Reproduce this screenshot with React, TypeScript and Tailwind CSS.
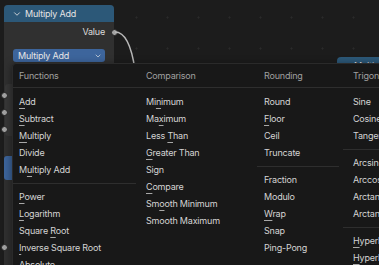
import { ChevronDown } from "lucide-react";

type Item = [string, number] | null;

type Column = {
  title: string;
  w: string;
  pl: string;
  items: Item[];
};

const columns: Column[] = [
  {
    title: "Functions",
    w: "w-[127px]",
    pl: "pl-[6px]",
    items: [
      ["Add", 0],
      ["Subtract", 0],
      ["Multiply", 0],
      ["Divide", -1],
      ["Multiply Add", 1],
      null,
      ["Power", 0],
      ["Logarithm", 0],
      ["Square Root", 7],
      ["Inverse Square Root", 0],
      ["Absolute", 0],
    ],
  },
  {
    title: "Comparison",
    w: "w-[117px]",
    pl: "pl-[6px]",
    items: [
      ["Minimum", 2],
      ["Maximum", 2],
      ["Less Than", 5],
      ["Greater Than", 0],
      ["Sign", -1],
      ["Compare", 0],
      ["Smooth Minimum", 2],
      ["Smooth Maximum", -1],
    ],
  },
  {
    title: "Rounding",
    w: "w-[86px]",
    pl: "pl-[7px]",
    items: [
      ["Round", -1],
      ["Floor", 0],
      ["Ceil", -1],
      ["Truncate", -1],
      null,
      ["Fraction", -1],
      ["Modulo", -1],
      ["Wrap", 0],
      ["Snap", -1],
      ["Ping-Pong", -1],
    ],
  },
  {
    title: "Trigonometric",
    w: "w-[110px]",
    pl: "pl-[10px]",
    items: [
      ["Sine", -1],
      ["Cosine", -1],
      ["Tangent", -1],
      null,
      ["Arcsine", -1],
      ["Arccosine", -1],
      ["Arctangent", -1],
      ["Arctan2", -1],
      null,
      ["Hyperbolic Sine", 0],
      ["Hyperbolic Cosine", 0],
    ],
  },
];

function Label({ text, u }: { text: string; u: number }) {
  if (u < 0) return <span>{text}</span>;
  return (
    <span>
      {text.slice(0, u)}
      <span className="underline decoration-[#a8a8a8] underline-offset-[3px]">
        {text[u]}
      </span>
      {text.slice(u + 1)}
    </span>
  );
}

function Socket({ className }: { className: string }) {
  return (
    <span
      className={`absolute h-[7px] w-[7px] rounded-full border border-[#222] bg-[#a3a3a3] ${className}`}
    />
  );
}

export default function App() {
  return (
    <div className="relative h-[265px] w-[379px] overflow-hidden bg-[#1c1c1c] bg-[radial-gradient(circle,#2a2a2a_0.8px,transparent_1.3px)] bg-[length:31px_31px] bg-[position:-3px_2px] font-['Inter','Liberation_Sans',sans-serif] text-[9px] tracking-[-0.2px]">
      {/* node: Multiply Add */}
      <div className="absolute left-[4px] top-[5px] flex h-[270px] w-[110px] flex-col rounded-[4px] bg-[#303030]">
        <div className="flex h-[17px] items-center gap-[3px] rounded-t-[4px] bg-[#2c5878] pl-[8px] text-[#e4e4e4]">
          <ChevronDown className="h-[10px] w-[10px]" strokeWidth={2} />
          <span>Multiply Add</span>
        </div>
        <div className="flex h-[20px] items-center justify-end pr-[9px] text-[#dcdcdc]">
          Value
        </div>
        <div className="mt-[7px] ml-[9px] flex h-[13px] w-[92px] items-center justify-between rounded-[3px] bg-[#3d659c] pl-[5px] pr-[3px] text-[#e8e8e8]">
          <span>Multiply Add</span>
          <ChevronDown className="h-[8px] w-[8px]" strokeWidth={2} />
        </div>
        <div className="ml-[1px] mt-[22px] h-[52px] w-[12px] rounded-[3px] bg-[#383838]" />
        <div className="mt-[20px] h-[24px] w-[12px] rounded-[3px] bg-[#3d659c]" />
      </div>
      <Socket className="left-[1px] top-[92px]" />
      <Socket className="left-[1px] top-[109px]" />
      <Socket className="left-[1px] top-[126px]" />
      <Socket className="left-[1px] top-[244px]" />
      <Socket className="left-[111px] top-[29px]" />

      <svg className="absolute left-0 top-0" width="379" height="265">
        <path d="M115 32 C 124 32, 131 42, 135 70" stroke="#b8b8b8" strokeWidth="1.5" fill="none" />
      </svg>

      {/* node header peeking on the right */}
      <div className="absolute left-[337px] top-[57px] flex h-[17px] w-[80px] items-center gap-[3px] rounded-t-[4px] bg-[#2c5878] pl-[5px] text-[#e4e4e4]">
        <ChevronDown className="h-[9px] w-[9px]" strokeWidth={2} />
        <span>Multiply</span>
      </div>

      {/* add menu */}
      <div className="absolute left-[12px] top-[63px] w-[460px] rounded-tl-[4px] border border-[#2a2a2a] bg-[#181818] pb-[20px] shadow-[0_2px_8px_rgba(0,0,0,0.5)]">
        <div className="flex h-[24px] items-center border-b border-[#2e2e2e] text-[#a0a0a0]">
          {columns.map((c) => (
            <div key={c.title} className={`${c.w} ${c.pl} shrink-0`}>
              {c.title}
            </div>
          ))}
        </div>
        <div className="flex pt-[5px] text-[#d4d4d4]">
          {columns.map((c) => (
            <div key={c.title} className={`${c.w} flex shrink-0 flex-col`}>
              {c.items.map((it, i) =>
                it ? (
                  <div key={i} className={`flex h-[17px] items-center ${c.pl} whitespace-nowrap`}>
                    <Label text={it[0]} u={it[1]} />
                  </div>
                ) : (
                  <div key={i} className="flex h-[10px] items-center pr-[4px]">
                    <div className="h-px w-full bg-[#2e2e2e]" />
                  </div>
                ),
              )}
            </div>
          ))}
        </div>
      </div>
    </div>
  );
}
